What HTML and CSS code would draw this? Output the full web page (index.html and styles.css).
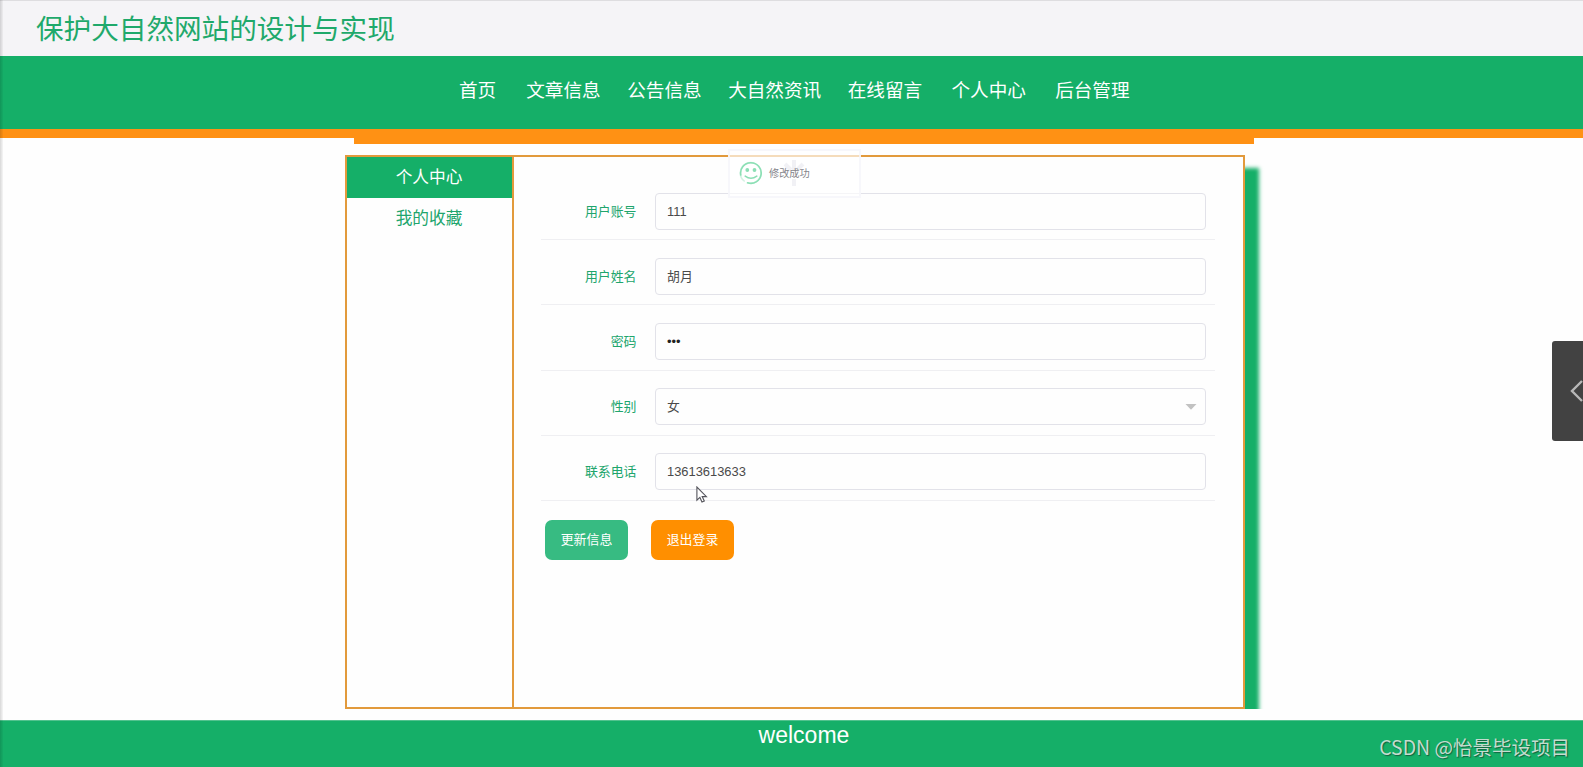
FILE: index.html
```html
<!DOCTYPE html>
<html lang="zh-CN">
<head>
<meta charset="utf-8">
<title>保护大自然网站的设计与实现</title>
<link rel="stylesheet" href="styles.css">
</head>
<body>
<header class="site-header"><h1>保护大自然网站的设计与实现</h1></header>
<nav class="nav">
  <a class="home">首页</a><a>文章信息</a><a>公告信息</a><a>大自然资讯</a><a class="wide">在线留言</a><a class="wide">个人中心</a><a>后台管理</a>
</nav>
<div class="strip"></div>
<main class="main">
  <div class="panel">
    <aside class="side">
      <a class="side-item active">个人中心</a>
      <a class="side-item">我的收藏</a>
    </aside>
    <form class="form">
      <div class="row"><label>用户账号</label><div class="field">111</div></div>
      <div class="row"><label>用户姓名</label><div class="field">胡月</div></div>
      <div class="row"><label>密码</label><div class="field password">•••</div></div>
      <div class="row"><label>性别</label><div class="field select"><span>女</span><svg width="12" height="6" viewBox="0 0 12 6"><path d="M.5 0h11L6 5.7z" fill="#c2c2c2"/></svg></div></div>
      <div class="row"><label>联系电话</label><div class="field">13613613633</div></div>
      <div class="actions"><button type="button" class="btn update">更新信息</button><button type="button" class="btn logout">退出登录</button></div>
    </form>
  </div>
</main>
<footer class="footer">welcome</footer>

<div class="toast">
  <svg class="burst" width="28" height="28" viewBox="0 0 28 28" fill="none" stroke="#f1f1f5" stroke-width="4"><path d="M14 1v10M5 5l6 6M23 5l-6 6M14 20v7"/></svg>
  <svg class="smile" width="24" height="24" viewBox="0 0 24 24" fill="none" stroke="#8cdfb5" stroke-width="1.6" stroke-linecap="round"><path d="M5.2 20A10.3 10.3 0 1 1 8.6 21.8" stroke="#d3f3e2"/><path d="M1.8 14A10.3 10.3 0 1 1 8.6 21.8"/><path d="M6.2 15.2Q12 19.3 17.8 15.2"/><circle cx="8.3" cy="9" r="1.1" fill="#8cdfb5"/><circle cx="15.5" cy="9" r="1.1" fill="#8cdfb5"/></svg>
  <span>修改成功</span>
</div>
<div class="drawer"><svg width="14" height="24" viewBox="0 0 14 24" fill="none" stroke="#b8b8b8" stroke-width="2.4"><path d="M13 2L3 12l10 10"/></svg></div>
<svg class="cursor" width="12" height="18" viewBox="0 0 12 18" fill="#fff" stroke="#55555c" stroke-width="1.1"><path d="M.9 1v13.2l3-2.8 2.1 4.6 2.3-1-2.1-4.4h4.2z"/></svg>
<div class="watermark">CSDN @怡景毕设项目</div>
<div class="edge"></div>
</body>
</html>
```
FILE: styles.css
```css
* { box-sizing: border-box; }
body {
  margin: 0;
  height: 767px;
  display: flex;
  flex-direction: column;
  overflow: hidden;
  position: relative;
  background: #fefefe;
  font-family: "Liberation Sans", "Noto Sans CJK SC", sans-serif;
}
.site-header, .nav, .strip, .main, .footer { flex: none; }
.site-header {
  height: 56px;
  padding: 2px 0 0 36px;
  background: #f5f4f7;
  border-top: 1px solid #dedde0;
  display: flex;
  align-items: center;
}
h1 { margin: 0; font-size: 27.6px; line-height: 40px; font-weight: 400; color: #1fa96b; }
.nav {
  height: 82px;
  padding: 0 0 4px 459px;
  background: #15af68;
  border-bottom: 9px solid #ff9114;
  display: flex;
  align-items: center;
  color: #fff;
  font-size: 18.6px;
  line-height: 28px;
  white-space: nowrap;
}
.nav a { margin-right: 26.6px; }
.nav .home { margin-right: 30px; }
.nav .wide { margin-right: 29.3px; }
.strip { width: 900px; height: 6px; margin-left: 354px; background: #ff9114; }
.main {
  height: 565px;
  margin-bottom: 11px;
  padding: 11px 0 0 345px;
  overflow: hidden;
}
.panel {
  width: 900px;
  height: 554px;
  display: flex;
  border: 2px solid #e29a3c;
  background: #fefefe;
  box-shadow: 14px 13px 4px #15af68;
}
.side { width: 167px; border-right: 2px solid #e29a3c; }
.side-item {
  display: block;
  height: 41px;
  padding-right: 1px;
  line-height: 41px;
  text-align: center;
  font-size: 16.7px;
  color: #20a56c;
}
.side-item.active { background: #15af68; color: #fff; }
.form { flex: 1; padding: 18px 28px 0 27px; }
.row {
  height: 65.2px;
  padding: 17.7px 9px 0 0;
  display: flex;
  border-bottom: 1px solid #efeff2;
}
.row label {
  width: 114px;
  padding-right: 18.5px;
  line-height: 37px;
  text-align: right;
  font-size: 12.9px;
  color: #20a56c;
}
.field {
  flex: 1;
  height: 37px;
  padding: 0 11px;
  line-height: 35px;
  border: 1px solid #e2e2e9;
  border-radius: 4px;
  font-size: 12.9px;
  color: #4a4a4a;
}
.select { display: flex; justify-content: space-between; align-items: center; padding-right: 8px; }
.password { color: #222; }
.actions { display: flex; gap: 23px; padding: 18.6px 0 0 4px; }
.btn {
  width: 83px;
  height: 40px;
  padding: 0 0 3px;
  border: 0;
  border-radius: 7px;
  font: 12.9px "Liberation Sans", "Noto Sans CJK SC", sans-serif;
  color: #fff;
}
.update { background: #37bb82; }
.logout { background: #ff8f00; }
.footer {
  height: 47px;
  padding-left: 25px;
  background: #15af68;
  border-top: 1px solid #52c28e;
  text-align: center;
  color: #fff;
  font-size: 23px;
  line-height: 28px;
}
.toast {
  position: absolute;
  left: 728px;
  top: 149px;
  width: 133px;
  height: 49px;
  padding: 0 0 2px 9px;
  display: flex;
  align-items: center;
  gap: 6px;
  background: rgba(255,255,255,.65);
  border: 2px solid rgba(245,245,250,.8);
  font-size: 10.2px;
  color: #85858a;
}
.toast span { position: relative; }
.burst { position: absolute; left: 50px; top: 8px; }
.drawer {
  position: absolute;
  right: 0;
  top: 341px;
  width: 31px;
  height: 100px;
  display: flex;
  align-items: center;
  justify-content: flex-end;
  border-radius: 3px 0 0 3px;
  background: #424242;
}
.cursor { position: absolute; left: 696px; top: 486px; }
.watermark {
  position: absolute;
  right: 13px;
  top: 733px;
  font: 400 19.5px/28px "Noto Sans CJK SC", sans-serif;
  color: #c4dccf;
  text-shadow: 1px 1px 1px #12613e;
  white-space: nowrap;
}
.edge {
  position: absolute;
  left: 0;
  top: 0;
  width: 3px;
  height: 767px;
  background: linear-gradient(to right, rgba(0,0,0,.15), rgba(0,0,0,.03));
}
```
